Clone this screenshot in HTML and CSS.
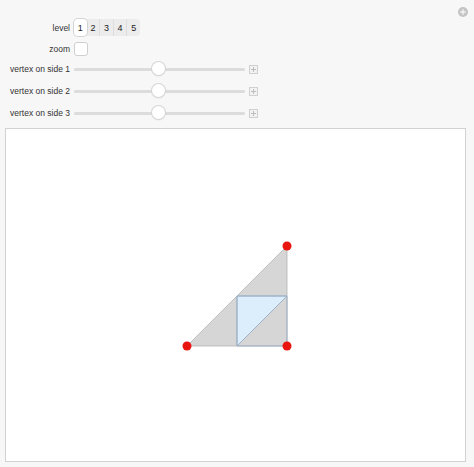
FILE: index.html
```html
<!DOCTYPE html>
<html>
<head>
<meta charset="utf-8">
<link rel="stylesheet" href="styles.css">
</head>
<body>
<div class="app">
  <div class="gear">
    <svg width="12" height="12" viewBox="0 0 12 12"><circle cx="6" cy="6" r="5" fill="#c4c4c4"/><path d="M6 3.3v5.4M3.3 6h5.4" stroke="#f2f2f2" stroke-width="1.4"/></svg>
  </div>
  <div class="controls">
    <div class="label">level</div>
    <div class="seg">
      <span class="btn active">1</span><span class="btn">2</span><span class="btn">3</span><span class="btn">4</span><span class="btn">5</span>
    </div>
    <div class="label">zoom</div>
    <div class="ctl"><span class="check"></span></div>
    <div class="label">vertex on side 1</div>
    <div class="slider"><div class="track"><span class="thumb"></span></div><span class="plus"></span></div>
    <div class="label">vertex on side 2</div>
    <div class="slider"><div class="track"><span class="thumb"></span></div><span class="plus"></span></div>
    <div class="label">vertex on side 3</div>
    <div class="slider"><div class="track"><span class="thumb"></span></div><span class="plus"></span></div>
  </div>
  <div class="plot">
    <svg width="459" height="332" viewBox="0 0 459 332">
      <polygon points="181,217 281,217 281,117" fill="#d6d6d6" stroke="#b4b4b4" stroke-width="0.8"/>
      <polygon points="231,167 281,167 231,217" fill="#dceefc" stroke="#9fb3c8" stroke-width="1"/>
      <polyline points="231,167 281,167 281,217 231,217 231,167" fill="none" stroke="#9fb3c8" stroke-width="1"/>
      <circle cx="181" cy="217" r="4.5" fill="#e8160f"/>
      <circle cx="281" cy="217" r="4.5" fill="#e8160f"/>
      <circle cx="281" cy="117" r="4.5" fill="#e8160f"/>
    </svg>
  </div>
</div>
</body>
</html>
```

FILE: styles.css
```css
html, body {
  margin: 0;
  padding: 0;
}
body {
  width: 474px;
  height: 467px;
  background: #f7f7f7;
  font-family: "Liberation Sans", Arial, sans-serif;
  overflow: hidden;
}
.app {
  position: relative;
  width: 474px;
  height: 467px;
  padding-top: 19px;
  box-sizing: border-box;
}
.gear {
  position: absolute;
  left: 457px;
  top: 6px;
  width: 12px;
  height: 12px;
}
.gear svg { display: block; }
.controls {
  display: grid;
  grid-template-columns: 70px 1fr;
  grid-template-rows: 17px 13px 16px 16px 16px;
  column-gap: 4px;
  row-gap: 6px;
}
.label {
  font-size: 8.5px;
  color: #333;
  text-align: right;
  align-self: center;
  white-space: nowrap;
}
.seg {
  display: flex;
  width: 66px;
  height: 17px;
  background: #ececec;
  border-radius: 4px;
}
.btn {
  flex: 1;
  font-size: 9px;
  color: #222;
  display: flex;
  align-items: center;
  justify-content: center;
  border-right: 1px solid #dedede;
}
.btn:last-child { border-right: none; }
.btn.active {
  background: #fff;
  border-radius: 4px;
  box-shadow: 0 0 0 1px #d4d4d4;
  border-right: none;
}
.ctl { display: flex; align-items: center; }
.check {
  width: 12px;
  height: 12px;
  background: #fff;
  border: 1px solid #cfcfcf;
  border-radius: 3px;
  display: block;
}
.slider {
  display: flex;
  align-items: center;
  width: 190px;
}
.track {
  position: relative;
  width: 171px;
  height: 3px;
  background: #dcdcdc;
  border-radius: 2px;
}
.thumb {
  position: absolute;
  left: 78px;
  top: -6px;
  width: 13px;
  height: 13px;
  border-radius: 50%;
  background: #fff;
  box-shadow: 0 0 0 1px #d6d6d6, 0 1px 2px rgba(0,0,0,0.12);
}
.plus {
  margin-left: 4px;
  width: 7px;
  height: 7px;
  border: 1px solid #d0d0d0;
  background:
    linear-gradient(#bdbdbd, #bdbdbd) center / 5px 1px no-repeat,
    linear-gradient(#bdbdbd, #bdbdbd) center / 1px 5px no-repeat,
    #f2f2f2;
  display: block;
}
.plot {
  margin-top: 8px;
  margin-left: 6px;
  width: 459px;
  height: 332px;
  background: #fff;
  box-shadow: 0 0 0 1px #d2d2d2;
}
.plot svg { display: block; }
```
